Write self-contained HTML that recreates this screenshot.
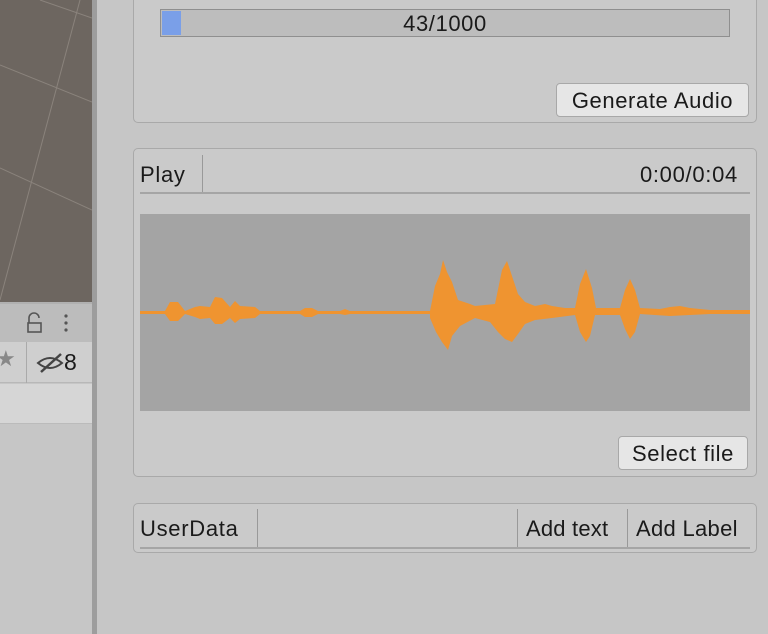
<!DOCTYPE html><html><head><style>
body{margin:0;width:768px;height:634px;overflow:hidden;background:#c6c6c6;font-family:"Liberation Sans",sans-serif;color:#1a1a1a;position:relative}
.a{position:absolute;box-sizing:border-box}
.box{border:1px solid #a9a9a9;border-radius:5px;background:#cacaca}
.btn{background:#e6e6e6;border:1px solid #a8a8a8;border-radius:4px;font-size:22px;letter-spacing:0.6px;text-align:center;line-height:33px;white-space:nowrap}
.t{font-size:22px;letter-spacing:0.7px;line-height:40px;white-space:nowrap}
</style></head><body>
<div class="a" style="left:0;top:0;width:92px;height:302px;background:#6d6660"></div>
<svg class="a" style="left:0;top:0" width="92" height="302"><g stroke="#8a837c" stroke-width="1" fill="none"><line x1="40" y1="0" x2="92" y2="18"/><line x1="0" y1="65" x2="92" y2="102"/><line x1="0" y1="168" x2="92" y2="210"/><line x1="80" y1="0" x2="0" y2="300"/></g></svg>
<div class="a" style="left:0;top:302px;width:92px;height:40px;background:#bcbcbc;border-top:2px solid #b0b0b0"></div>
<svg class="a" style="left:26px;top:310px" width="60" height="26"><path d="M3 13 V8 a5 5 0 0 1 10 0" stroke="#555" stroke-width="1.6" fill="none"/><rect x="2" y="13" width="13" height="9" fill="none" stroke="#555" stroke-width="1.6"/><circle cx="40" cy="6" r="1.6" fill="#555"/><circle cx="40" cy="13" r="1.6" fill="#555"/><circle cx="40" cy="20" r="1.6" fill="#555"/></svg>
<div class="a" style="left:0;top:342px;width:92px;height:41px;background:#cfcfcf;border-bottom:1px solid #b8b8b8"></div>
<div class="a" style="left:26px;top:342px;width:1px;height:41px;background:#aaa"></div>
<div class="a" style="left:-4px;top:346px;font-size:22px;color:#888">★</div>
<svg class="a" style="left:36px;top:350px" width="30" height="26"><path d="M2 13 Q14 3 26 13 Q14 23 2 13Z" fill="none" stroke="#444" stroke-width="2"/><line x1="5" y1="22" x2="25" y2="4" stroke="#444" stroke-width="2.5"/></svg>
<div class="a" style="left:64px;top:346px;font-size:23px;line-height:32px">8</div>
<div class="a" style="left:0;top:384px;width:92px;height:40px;background:#d6d6d6;border-bottom:1px solid #bbb"></div>
<div class="a" style="left:92px;top:0;width:5px;height:634px;background:#9d9d9d"></div>

<div class="a box" style="left:133px;top:-10px;width:624px;height:133px"></div>
<div class="a" style="left:160px;top:9px;width:570px;height:28px;background:#bdbdbd;border:1px solid #8f8f8f;font-size:22px;letter-spacing:0.6px;text-align:center;line-height:27px">43/1000</div>
<div class="a" style="left:162px;top:11px;width:19px;height:24px;background:#7a9fe8"></div>
<div class="a btn" style="left:556px;top:83px;width:193px;height:34px">Generate Audio</div>

<div class="a box" style="left:133px;top:148px;width:624px;height:329px"></div>
<div class="a t" style="left:140px;top:155px">Play</div>
<div class="a" style="left:202px;top:155px;width:1px;height:38px;background:#999"></div>
<div class="a" style="left:140px;top:192px;width:610px;height:2px;background:#a5a5a5"></div>
<div class="a t" style="right:30px;top:155px">0:00/0:04</div>
<div class="a" style="left:140px;top:214px;width:610px;height:197px;background:#a4a4a4"></div>
<svg class="a" style="left:140px;top:214px" width="610" height="197"><path fill="#ef9430" d="M0 97 L25 97 L30 88 L38 88 L45 97 L55 93 L60 92 L70 93 L75 83 L82 84 L90 93 L95 87 L100 92 L115 93 L120 97 L160 97 L165 94 L172 94 L178 97 L200 97 L205 95 L210 97 L290 97 L295 72 L300 60 L303 46 L307 58 L312 68 L318 86 L330 90 L335 92 L355 90 L362 56 L367 47 L372 62 L378 80 L385 88 L395 92 L405 90 L412 92 L425 94 L435 94 L440 70 L446 55 L452 74 L456 94 L480 94 L485 76 L490 65 L495 76 L500 94 L520 95 L530 93 L540 92 L550 94 L570 96 L610 96 L610 100 L570 100 L550 101 L530 102 L500 100 L495 118 L490 125 L485 115 L480 101 L455 101 L450 122 L446 128 L440 118 L435 101 L412 104 L395 106 L385 110 L378 120 L372 128 L365 125 L358 118 L350 108 L335 104 L320 112 L312 122 L308 136 L302 128 L296 118 L290 104 L290 100 L210 100 L205 101 L200 100 L178 100 L172 103 L165 103 L160 100 L120 100 L115 104 L100 105 L95 109 L90 104 L82 110 L75 110 L70 104 L60 105 L55 103 L45 100 L38 107 L30 107 L25 100 L0 100Z"/></svg>
<div class="a btn" style="left:618px;top:436px;width:130px;height:34px">Select file</div>

<div class="a box" style="left:133px;top:503px;width:624px;height:50px"></div>
<div class="a t" style="left:140px;top:509px">UserData</div>
<div class="a" style="left:257px;top:509px;width:1px;height:38px;background:#999"></div>
<div class="a" style="left:517px;top:509px;width:1px;height:38px;background:#999"></div>
<div class="a" style="left:627px;top:509px;width:1px;height:38px;background:#999"></div>
<div class="a t" style="left:526px;top:509px;letter-spacing:0.2px">Add text</div>
<div class="a t" style="left:636px;top:509px;letter-spacing:0.3px">Add Label</div>
<div class="a" style="left:140px;top:547px;width:610px;height:2px;background:#a5a5a5"></div>
</body></html>
